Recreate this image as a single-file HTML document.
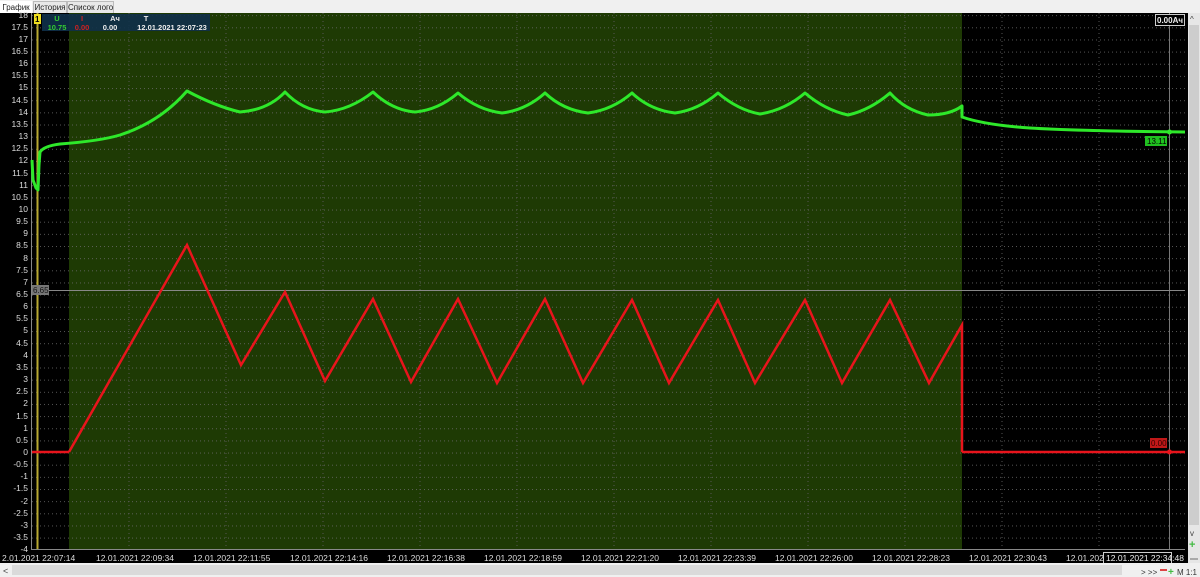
<!DOCTYPE html>
<html><head><meta charset="utf-8"><style>
body{margin:0;width:1200px;height:577px;overflow:hidden;background:#f0f0f0;font-family:"Liberation Sans",sans-serif}
.tabs{position:absolute;top:0;left:0;height:13px;width:1200px;background:#f0f0f0;font-size:8px;color:#222}
.tab{position:absolute;top:1px;height:12px;line-height:11px;text-align:center;border:1px solid #bbb;border-bottom:none;background:#e8e8e8;box-sizing:border-box;white-space:nowrap;overflow:hidden}
svg{position:absolute;top:0;left:0}
</style></head><body>
<div class="tabs"><div class="tab" style="left:0;width:32px;background:#fff;border-color:#fff">График</div><div class="tab" style="left:33px;width:34px">История</div><div class="tab" style="left:67px;width:47px">Список логов</div></div>
<svg width="1200" height="577" viewBox="0 0 1200 577" font-family="Liberation Sans, sans-serif">
<defs>
<pattern id="hg" x="0" y="3" width="4" height="12.15" patternUnits="userSpaceOnUse"><rect x="0" y="0" width="1" height="1" fill="#6a6a6a"/></pattern>
</defs>
<rect x="0" y="13" width="1188" height="550" fill="#000"/>
<rect x="69" y="13" width="893" height="536" fill="#1e3a04"/>
<rect x="32" y="13" width="1153" height="536" fill="url(#hg)" opacity="0.8"/>
<g stroke="#555" stroke-dasharray="1 3" stroke-width="1">
<line x1="129" y1="13" x2="129" y2="549"/><line x1="226" y1="13" x2="226" y2="549"/><line x1="323" y1="13" x2="323" y2="549"/><line x1="420" y1="13" x2="420" y2="549"/><line x1="517" y1="13" x2="517" y2="549"/><line x1="614" y1="13" x2="614" y2="549"/><line x1="711" y1="13" x2="711" y2="549"/><line x1="808" y1="13" x2="808" y2="549"/><line x1="905" y1="13" x2="905" y2="549"/><line x1="1002" y1="13" x2="1002" y2="549"/><line x1="1099" y1="13" x2="1099" y2="549"/>
</g>
<line x1="31.5" y1="13" x2="31.5" y2="549" stroke="#888"/>
<line x1="31" y1="549.5" x2="1185" y2="549.5" stroke="#888"/>
<line x1="1169.5" y1="13" x2="1169.5" y2="549" stroke="#777"/>
<line x1="37.5" y1="13" x2="37.5" y2="549" stroke="#b8a830" stroke-width="2"/>
<line x1="32" y1="290.5" x2="1185" y2="290.5" stroke="#888"/>
<g font-size="8.5" fill="#ddd" text-anchor="end">
<text x="28" y="18">18</text><text x="28" y="30">17.5</text><text x="28" y="42">17</text><text x="28" y="54">16.5</text><text x="28" y="66">16</text><text x="28" y="78">15.5</text><text x="28" y="90">15</text><text x="28" y="103">14.5</text><text x="28" y="115">14</text><text x="28" y="127">13.5</text><text x="28" y="139">13</text><text x="28" y="151">12.5</text><text x="28" y="163">12</text><text x="28" y="176">11.5</text><text x="28" y="188">11</text><text x="28" y="200">10.5</text><text x="28" y="212">10</text><text x="28" y="224">9.5</text><text x="28" y="236">9</text><text x="28" y="248">8.5</text><text x="28" y="261">8</text><text x="28" y="273">7.5</text><text x="28" y="285">7</text><text x="28" y="297">6.5</text><text x="28" y="309">6</text><text x="28" y="321">5.5</text><text x="28" y="333">5</text><text x="28" y="346">4.5</text><text x="28" y="358">4</text><text x="28" y="370">3.5</text><text x="28" y="382">3</text><text x="28" y="394">2.5</text><text x="28" y="406">2</text><text x="28" y="419">1.5</text><text x="28" y="431">1</text><text x="28" y="443">0.5</text><text x="28" y="455">0</text><text x="28" y="467">-0.5</text><text x="28" y="479">-1</text><text x="28" y="491">-1.5</text><text x="28" y="504">-2</text><text x="28" y="516">-2.5</text><text x="28" y="528">-3</text><text x="28" y="540">-3.5</text><text x="28" y="552">-4</text>
</g>
<g font-size="8.5" fill="#ddd">
<text x="2" y="561">2.01.2021 22:07:14</text><text x="96" y="561">12.01.2021 22:09:34</text><text x="193" y="561">12.01.2021 22:11:55</text><text x="290" y="561">12.01.2021 22:14:16</text><text x="387" y="561">12.01.2021 22:16:38</text><text x="484" y="561">12.01.2021 22:18:59</text><text x="581" y="561">12.01.2021 22:21:20</text><text x="678" y="561">12.01.2021 22:23:39</text><text x="775" y="561">12.01.2021 22:26:00</text><text x="872" y="561">12.01.2021 22:28:23</text><text x="969" y="561">12.01.2021 22:30:43</text><text x="1066" y="561">12.01.2021</text>
</g>
<rect x="1103.5" y="552.5" width="68" height="11" fill="#000" stroke="#ccc"/>
<text x="1106" y="561" font-size="8.5" fill="#eee">12.01.2021 22:34:48</text>
<path d="M69,452 L187,245 L241,365 L285,292 L325,381 L373,299 L411,382 L458,299 L497,383 L545,299 L583,383 L632,300 L669,383 L718,300 L755,383 L805,300 L842,383 L890,300 L929,383 L962,325 L962,452" fill="none" stroke="#e8141c" stroke-width="2.5" stroke-linejoin="miter"/>
<line x1="32" y1="452" x2="69" y2="452" stroke="#e8141c" stroke-width="2.5"/>
<line x1="962" y1="452" x2="1185" y2="452" stroke="#e8141c" stroke-width="2.5"/>
<path d="M32,160 L33,180 L36,188 L38,190 L39,165 L40,152 Q44,146 60,144 Q100,141 120,135 Q160,122 187,91 Q215,106 240,112 Q268,110 285,92 Q302,110 325,112 Q350,110 373,92 Q392,110 415,112 Q438,110 458,93 Q478,110 502,113 Q526,110 545,93 Q563,110 588,113 Q612,110 632,93 Q650,110 675,113 Q698,110 718,93 Q738,110 760,114 Q785,110 805,93 Q825,110 848,115 Q870,110 890,93 Q905,110 928,115 Q950,115 962,106 L962,117 Q985,125 1030,128 Q1080,131 1185,132" fill="none" stroke="#2ee82a" stroke-width="3" stroke-linejoin="round"/>
<circle cx="1169.5" cy="132" r="2.5" fill="#2ee82a"/>
<circle cx="1169.5" cy="452" r="2.5" fill="#e8141c"/>
<rect x="1145" y="136" width="22" height="10" fill="#20c020"/><text x="1147" y="144" font-size="8" fill="#000">13.11</text>
<rect x="1150" y="438" width="17" height="10" fill="#c01818"/><text x="1151" y="446" font-size="8" fill="#300">0.00</text>
<rect x="32" y="285" width="17" height="10" fill="#777"/><text x="33" y="293" font-size="8" fill="#111">6.65</text>
<rect x="42" y="14" width="168" height="17" fill="#10304a" opacity="0.9"/>
<rect x="34" y="14" width="7" height="10" fill="#f0e020"/><text x="35" y="22" font-size="8" font-weight="bold" fill="#000">1</text>
<g font-size="7.5" font-weight="bold" text-anchor="middle">
<text x="57" y="21" fill="#3c3">U</text><text x="57" y="30" fill="#3c3">10.75</text>
<text x="82" y="21" fill="#c22">I</text><text x="82" y="30" fill="#c22">0.00</text>
<text x="115" y="21" fill="#eee">Ач</text><text x="110" y="30" fill="#eee">0.00</text>
<text x="146" y="21" fill="#eee">T</text><text x="172" y="30" fill="#eee">12.01.2021 22:07:23</text>
</g>
<rect x="1155.5" y="14.5" width="29" height="11" fill="#000" stroke="#ccc"/>
<text x="1157" y="23" font-size="8" font-weight="bold" fill="#eee">0.00Ач</text>
<rect x="1188" y="13" width="12" height="550" fill="#e6e6e6"/>
<rect x="1189" y="25" width="10" height="500" fill="#cdcdcd"/>
<text x="1190" y="22" font-size="8" fill="#444">^</text>
<text x="1190" y="536" font-size="8" fill="#444">v</text>
<text x="1189" y="548" font-size="11" font-weight="bold" fill="#4b4">+</text>
<rect x="1190" y="558" width="8" height="2" fill="#aaa"/>
<rect x="0" y="563" width="1188" height="14" fill="#f0f0f0"/>
<rect x="12" y="565" width="1110" height="10" fill="#dadada"/>
<text x="3" y="574" font-size="9" fill="#444">&lt;</text>
<text x="1141" y="575" font-size="8" fill="#333">&gt; &gt;&gt;</text>
<rect x="1160" y="569" width="7" height="2" fill="#d44"/>
<text x="1168" y="575" font-size="10" font-weight="bold" fill="#4b4">+</text>
<text x="1177" y="575" font-size="8" fill="#333">M 1:1</text>
</svg>
</body></html>
